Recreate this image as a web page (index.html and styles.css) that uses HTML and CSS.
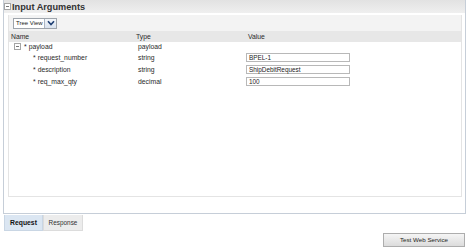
FILE: index.html
```html
<!DOCTYPE html>
<html>
<head>
<meta charset="utf-8">
<link rel="stylesheet" href="styles.css">
</head>
<body>
<div class="panel">
  <div class="panel-header">
    <span class="box-icon big"></span>
    <span class="title">Input Arguments</span>
  </div>
  <div class="inner">
    <div class="toolbar">
      <div class="select">
        <span class="select-text">Tree View</span>
        <span class="select-btn">
          <svg width="8" height="6" viewBox="0 0 8 6"><path d="M1 1.2 L4 4.6 L7 1.2" fill="none" stroke="#1f3f73" stroke-width="1.6"/></svg>
        </span>
      </div>
    </div>
    <div class="grid head">
      <div class="c1">Name</div>
      <div class="c2">Type</div>
      <div class="c3">Value</div>
    </div>
    <div class="grid row first">
      <div class="c1"><span class="box-icon"></span><span class="star">*</span>payload</div>
      <div class="c2">payload</div>
      <div class="c3"></div>
    </div>
    <div class="grid row">
      <div class="c1 child"><span class="star">*</span>request_number</div>
      <div class="c2">string</div>
      <div class="c3"><span class="input">BPEL-1</span></div>
    </div>
    <div class="grid row">
      <div class="c1 child"><span class="star">*</span>description</div>
      <div class="c2">string</div>
      <div class="c3"><span class="input">ShipDebitRequest</span></div>
    </div>
    <div class="grid row">
      <div class="c1 child"><span class="star">*</span>req_max_qty</div>
      <div class="c2">decimal</div>
      <div class="c3"><span class="input">100</span></div>
    </div>
  </div>
</div>
<div class="tabs">
  <div class="tab active">Request</div>
  <div class="tab">Response</div>
</div>
<div class="actions">
  <div class="button">Test Web Service</div>
</div>
</body>
</html>
```
FILE: styles.css
```css
html, body {
  margin: 0;
  padding: 0;
  background: #ffffff;
}
body {
  width: 474px;
  height: 251px;
  font-family: "Liberation Sans", Arial, sans-serif;
  font-size: 6.8px;
  color: #2a2a2a;
  overflow: hidden;
  white-space: nowrap;
}
.panel {
  margin-left: 3px;
  width: 463px;
  height: 214px;
  box-sizing: border-box;
  border: 1px solid #c6ced8;
  border-top: none;
  display: flex;
  flex-direction: column;
}
.panel-header {
  height: 13px;
  background: linear-gradient(#e2e2e2, #efefef);
  display: flex;
  align-items: center;
}
.title {
  font-weight: bold;
  font-size: 9.2px;
  color: #333;
  margin-left: 1px;
}
.box-icon {
  display: inline-block;
  width: 5px;
  height: 5px;
  border: 1px solid #a5a5a5;
  position: relative;
  background: #fff;
  box-sizing: content-box;
}
.box-icon::after {
  content: "";
  position: absolute;
  left: 1px;
  right: 1px;
  top: 2px;
  height: 1px;
  background: #777;
}
.inner {
  margin: 2px 3px 0 4px;
  height: 182px;
  border: 1px solid #e4e4e4;
  border-top: none;
  box-sizing: border-box;
}
.toolbar {
  height: 16px;
  background: #f3f3f3;
  display: flex;
  align-items: center;
  padding-left: 4px;
}
.select {
  display: flex;
  align-items: stretch;
  height: 11px;
  border: 1px solid #9ea4ab;
  background: #fff;
  box-sizing: border-box;
  width: 44px;
}
.select-text {
  flex: 1;
  font-size: 6px;
  line-height: 9px;
  padding-left: 2px;
  color: #222;
}
.select-btn {
  width: 11px;
  border-left: 1px solid #aab4c2;
  background: linear-gradient(#f4f7fb, #d9e2ee);
  display: flex;
  align-items: center;
  justify-content: center;
}
.grid {
  display: grid;
  grid-template-columns: 125px 112px 1fr;
}
.head {
  height: 11px;
  background: #e7e7e7;
  line-height: 11px;
}
.head .c1, .head .c2, .head .c3 {
  padding-left: 2px;
}
.row {
  height: 12px;
  align-items: center;
}
.row.first {
  height: 9px;
}
.row .c1 {
  display: flex;
  align-items: center;
  padding-left: 5px;
}
.row .c1.child {
  padding-left: 24px;
}
.row .c2 {
  padding-left: 4px;
}
.row .c1 .box-icon {
  margin-right: 3px;
}
.star {
  margin-right: 2px;
}
.c3 {
  display: flex;
  align-items: center;
}
.input {
  display: block;
  width: 104px;
  height: 9px;
  box-sizing: border-box;
  border: 1px solid #b8b8b8;
  font-size: 6.4px;
  line-height: 7px;
  padding-left: 2px;
  color: #222;
  background: #fff;
}
.tabs {
  display: flex;
  margin-left: 4px;
  margin-top: 1px;
  height: 16px;
}
.tab {
  height: 16px;
  box-sizing: border-box;
  line-height: 15px;
  font-size: 6.4px;
  background: #ececec;
  border: 1px solid #dcdcdc;
  border-top: none;
  color: #333;
  width: 40px;
  text-align: center;
}
.tab.active {
  background: #dbe6f2;
  border-color: #c9d6e4;
  font-weight: bold;
  font-size: 6.8px;
  color: #111;
  width: 39px;
}
.actions {
  display: flex;
  justify-content: flex-end;
  width: 465px;
  margin-top: 2px;
}
.button {
  width: 82px;
  height: 14px;
  box-sizing: border-box;
  border: 1px solid #adadad;
  background: linear-gradient(#f5f5f5, #dcdcdc);
  text-align: center;
  line-height: 12px;
  font-size: 6.2px;
  color: #222;
}
```
